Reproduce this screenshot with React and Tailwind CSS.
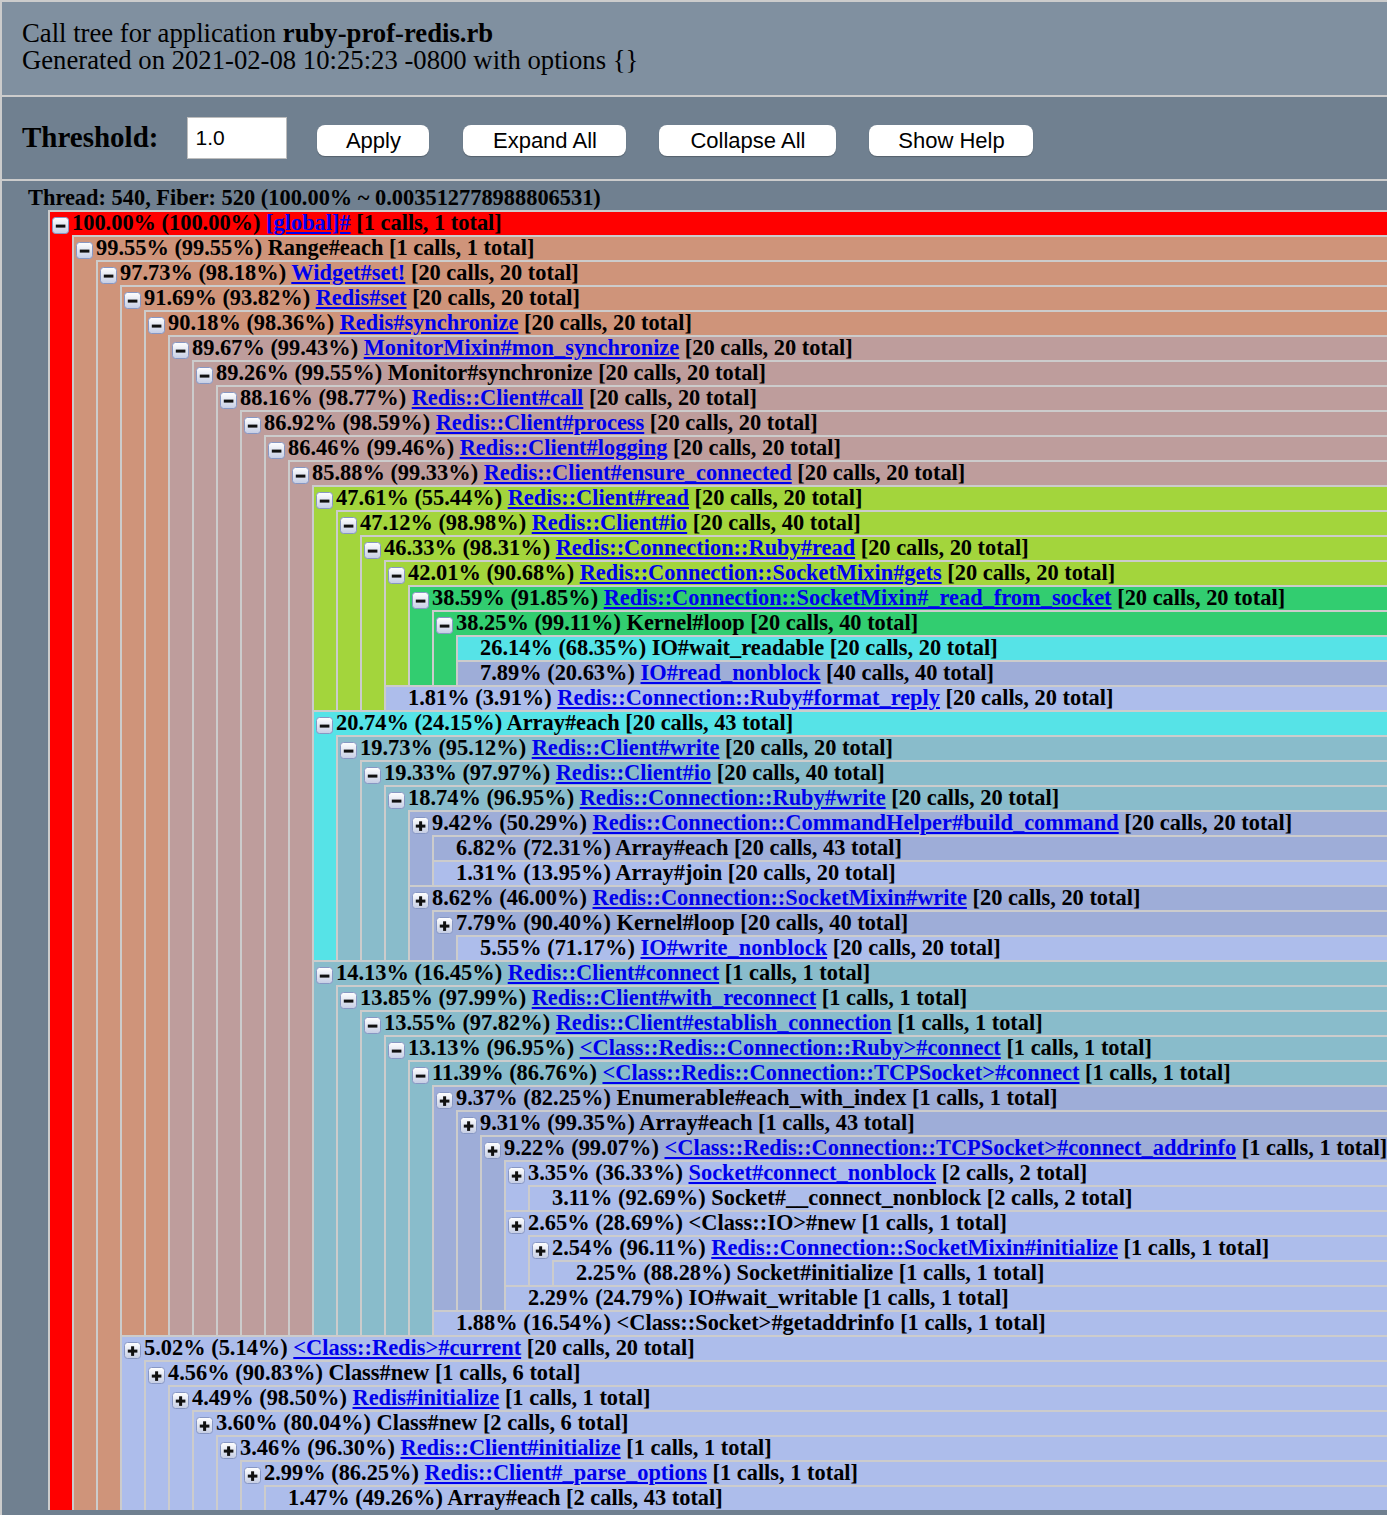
import React from 'react'

// ruby-prof palette, picked by the node's total percent
function colorClass(p) {
  if (p >= 100) return 'bg-[#ff0000]'
  const i = Math.floor(p)
  if (i <= 5) return 'bg-[#adbdeb]'
  if (i <= 10) return 'bg-[#9eadd8]'
  return [
    'bg-[#8e9ec5]',
    'bg-[#89bccb]',
    'bg-[#56e3e7]',
    'bg-[#32cd70]',
    'bg-[#a3d53c]',
    'bg-[#c4cb34]',
    'bg-[#dcb66d]',
    'bg-[#cda59e]',
    'bg-[#be9d9c]',
    'bg-[#cf947a]'
  ][Math.floor(i / 10)]
}

// t: total %, s: self-relative %, l: is a link, c: calls text, i: toggle icon
const n = (t, s, name, l, c, i, kids = []) => ({ t, s, name, l, c, i, kids })
const C20 = '[20 calls, 20 total]'
const C1 = '[1 calls, 1 total]'

const tree = n('100.00', '100.00', '[global]#', true, C1, 'minus', [
  n('99.55', '99.55', 'Range#each', false, C1, 'minus', [
    n('97.73', '98.18', 'Widget#set!', true, C20, 'minus', [
      n('91.69', '93.82', 'Redis#set', true, C20, 'minus', [
        n('90.18', '98.36', 'Redis#synchronize', true, C20, 'minus', [
          n('89.67', '99.43', 'MonitorMixin#mon_synchronize', true, C20, 'minus', [
            n('89.26', '99.55', 'Monitor#synchronize', false, C20, 'minus', [
              n('88.16', '98.77', 'Redis::Client#call', true, C20, 'minus', [
                n('86.92', '98.59', 'Redis::Client#process', true, C20, 'minus', [
                  n('86.46', '99.46', 'Redis::Client#logging', true, C20, 'minus', [
                    n('85.88', '99.33', 'Redis::Client#ensure_connected', true, C20, 'minus', [
                      n('47.61', '55.44', 'Redis::Client#read', true, C20, 'minus', [
                        n('47.12', '98.98', 'Redis::Client#io', true, '[20 calls, 40 total]', 'minus', [
                          n('46.33', '98.31', 'Redis::Connection::Ruby#read', true, C20, 'minus', [
                            n('42.01', '90.68', 'Redis::Connection::SocketMixin#gets', true, C20, 'minus', [
                              n('38.59', '91.85', 'Redis::Connection::SocketMixin#_read_from_socket', true, C20, 'minus', [
                                n('38.25', '99.11', 'Kernel#loop', false, '[20 calls, 40 total]', 'minus', [
                                  n('26.14', '68.35', 'IO#wait_readable', false, C20, null),
                                  n('7.89', '20.63', 'IO#read_nonblock', true, '[40 calls, 40 total]', null)
                                ])
                              ])
                            ]),
                            n('1.81', '3.91', 'Redis::Connection::Ruby#format_reply', true, C20, null)
                          ])
                        ])
                      ]),
                      n('20.74', '24.15', 'Array#each', false, '[20 calls, 43 total]', 'minus', [
                        n('19.73', '95.12', 'Redis::Client#write', true, C20, 'minus', [
                          n('19.33', '97.97', 'Redis::Client#io', true, '[20 calls, 40 total]', 'minus', [
                            n('18.74', '96.95', 'Redis::Connection::Ruby#write', true, C20, 'minus', [
                              n('9.42', '50.29', 'Redis::Connection::CommandHelper#build_command', true, C20, 'plus', [
                                n('6.82', '72.31', 'Array#each', false, '[20 calls, 43 total]', null),
                                n('1.31', '13.95', 'Array#join', false, C20, null)
                              ]),
                              n('8.62', '46.00', 'Redis::Connection::SocketMixin#write', true, C20, 'plus', [
                                n('7.79', '90.40', 'Kernel#loop', false, '[20 calls, 40 total]', 'plus', [
                                  n('5.55', '71.17', 'IO#write_nonblock', true, C20, null)
                                ])
                              ])
                            ])
                          ])
                        ])
                      ]),
                      n('14.13', '16.45', 'Redis::Client#connect', true, C1, 'minus', [
                        n('13.85', '97.99', 'Redis::Client#with_reconnect', true, C1, 'minus', [
                          n('13.55', '97.82', 'Redis::Client#establish_connection', true, C1, 'minus', [
                            n('13.13', '96.95', '<Class::Redis::Connection::Ruby>#connect', true, C1, 'minus', [
                              n('11.39', '86.76', '<Class::Redis::Connection::TCPSocket>#connect', true, C1, 'minus', [
                                n('9.37', '82.25', 'Enumerable#each_with_index', false, C1, 'plus', [
                                  n('9.31', '99.35', 'Array#each', false, '[1 calls, 43 total]', 'plus', [
                                    n('9.22', '99.07', '<Class::Redis::Connection::TCPSocket>#connect_addrinfo', true, C1, 'plus', [
                                      n('3.35', '36.33', 'Socket#connect_nonblock', true, '[2 calls, 2 total]', 'plus', [
                                        n('3.11', '92.69', 'Socket#__connect_nonblock', false, '[2 calls, 2 total]', null)
                                      ]),
                                      n('2.65', '28.69', '<Class::IO>#new', false, C1, 'plus', [
                                        n('2.54', '96.11', 'Redis::Connection::SocketMixin#initialize', true, C1, 'plus', [
                                          n('2.25', '88.28', 'Socket#initialize', false, C1, null)
                                        ])
                                      ]),
                                      n('2.29', '24.79', 'IO#wait_writable', false, C1, null)
                                    ])
                                  ])
                                ]),
                                n('1.88', '16.54', '<Class::Socket>#getaddrinfo', false, C1, null)
                              ])
                            ])
                          ])
                        ])
                      ])
                    ])
                  ])
                ])
              ])
            ])
          ])
        ])
      ]),
      n('5.02', '5.14', '<Class::Redis>#current', true, C20, 'plus', [
        n('4.56', '90.83', 'Class#new', false, '[1 calls, 6 total]', 'plus', [
          n('4.49', '98.50', 'Redis#initialize', true, C1, 'plus', [
            n('3.60', '80.04', 'Class#new', false, '[2 calls, 6 total]', 'plus', [
              n('3.46', '96.30', 'Redis::Client#initialize', true, C1, 'plus', [
                n('2.99', '86.25', 'Redis::Client#_parse_options', true, C1, 'plus', [
                  n('1.47', '49.26', 'Array#each', false, '[2 calls, 43 total]', null)
                ])
              ])
            ])
          ])
        ])
      ])
    ])
  ])
])

function ToggleIcon({ type }) {
  return (
    <svg width="17" height="17" viewBox="0 0 17 17" className="block">
      <defs>
        <linearGradient id="tg" x1="0" y1="0" x2="0" y2="1">
          <stop offset="0" stopColor="#ffffff" />
          <stop offset="1" stopColor="#c5cde4" />
        </linearGradient>
      </defs>
      <rect x="0.5" y="0.5" width="16" height="16" rx="3" fill="url(#tg)" stroke="#8797c4" />
      <rect x="3.8" y="7.6" width="9.6" height="3" fill="#111" />
      {type === 'plus' && <rect x="7.1" y="4.3" width="3" height="9.6" fill="#111" />}
    </svg>
  )
}

function Node({ node, root }) {
  return (
    <div
      className={`${root ? 'ml-[46px]' : 'ml-[22px]'} border-l-2 border-t-2 border-[#cccccc] ${colorClass(parseFloat(node.t))}`}
    >
      <div className="flex h-[23px] whitespace-nowrap leading-[21px]">
        <span className="w-[22px] shrink-0 pl-[2px] pt-[5px]">
          {node.i && <ToggleIcon type={node.i} />}
        </span>
        <span>
          {node.t}% ({node.s}%){' '}
          {node.l ? <a className="text-[#0000ee] underline">{node.name}</a> : node.name} {node.c}
        </span>
      </div>
      {node.kids.map((k, idx) => (
        <Node key={idx} node={k} />
      ))}
    </div>
  )
}

function Button({ label, width, className = '' }) {
  return (
    <button
      className={`${width} ${className} mt-[5px] h-[31px] rounded-[8px] bg-white text-center font-['Liberation_Sans',sans-serif] text-[22px] leading-[31px] text-black shadow-[0_1px_1px_rgba(0,0,0,0.25)]`}
    >
      {label}
    </button>
  )
}

export default function App() {
  return (
    <div className="h-[1515px] overflow-hidden border-l-2 border-[#cccccc] bg-[#708090] font-['Liberation_Serif',serif] text-black">
      <div className="h-[95px] border-t-2 border-[#cccccc] bg-[#8090a0] pl-[20px] pt-[18px] text-[26.7px] leading-[27px]">
        <div>
          Call tree for application <b>ruby-prof-redis.rb</b>
        </div>
        <div>Generated on 2021-02-08 10:25:23 -0800 with options {'{}'}</div>
      </div>

      <div className="flex h-[84px] items-center border-t-2 border-[#cccccc] pl-[20px]">
        <span className="text-[29px] font-bold">Threshold:</span>
        <input
          readOnly
          value="1.0"
          className="ml-[29px] h-[42px] w-[100px] border border-[#bdbdbd] bg-white pl-[7px] font-['Liberation_Sans',sans-serif] text-[21px] text-black outline-none"
        />
        <Button label="Apply" width="w-[112px]" className="ml-[30px]" />
        <Button label="Expand All" width="w-[163px]" className="ml-[34px]" />
        <Button label="Collapse All" width="w-[177px]" className="ml-[33px]" />
        <Button label="Show Help" width="w-[164px]" className="ml-[33px]" />
      </div>

      <div className="border-t-2 border-[#cccccc] pb-[4px] text-[22.4px] font-bold">
        <div className="h-[29px] whitespace-nowrap pl-[26px] pt-[4px] leading-[25px]">
          Thread: 540, Fiber: 520 (100.00% ~ 0.003512778988806531)
        </div>
        <Node node={tree} root />
      </div>
    </div>
  )
}
